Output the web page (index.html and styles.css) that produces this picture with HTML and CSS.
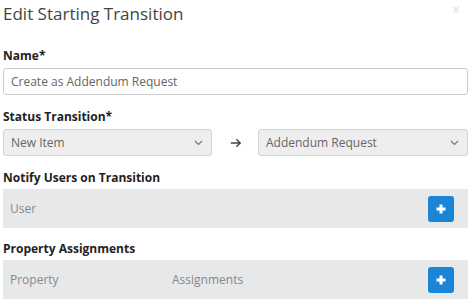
FILE: index.html
```html
<!DOCTYPE html>
<html lang="en">
<head>
  <meta charset="UTF-8" />
  <title>Edit Starting Transition</title>
  <link rel="stylesheet" href="styles.css">
</head>
<body>
  <div class="modal">
    <div class="modal-header">
      <h2>Edit Starting Transition</h2>
      <span class="close">&times;</span>
    </div>

    <label class="field-label">Name*</label>
    <div class="text-input">Create as Addendum Request</div>

    <label class="field-label">Status Transition*</label>
    <div class="transition-row">
      <div class="select">
        <span>New Item</span>
        <svg class="caret" width="9" height="6" viewBox="0 0 9 6"><path d="M1 1 L4.5 4.5 L8 1" fill="none" stroke="#777" stroke-width="1.2"/></svg>
      </div>
      <svg class="arrow" width="14" height="12" viewBox="0 0 14 12"><path d="M1 6 H12 M7.5 1.5 L12 6 L7.5 10.5" fill="none" stroke="#444" stroke-width="1.6"/></svg>
      <div class="select">
        <span>Addendum Request</span>
        <svg class="caret" width="9" height="6" viewBox="0 0 9 6"><path d="M1 1 L4.5 4.5 L8 1" fill="none" stroke="#777" stroke-width="1.2"/></svg>
      </div>
    </div>

    <label class="field-label">Notify Users on Transition</label>
    <div class="table-band">
      <span class="col-first">User</span>
      <button class="add-btn"><svg width="12" height="12" viewBox="0 0 12 12"><path d="M6 1.5 V10.5 M1.5 6 H10.5" stroke="#fff" stroke-width="3"/></svg></button>
    </div>

    <label class="field-label">Property Assignments</label>
    <div class="table-band">
      <span class="col-first">Property</span>
      <span class="col-second">Assignments</span>
      <button class="add-btn"><svg width="12" height="12" viewBox="0 0 12 12"><path d="M6 1.5 V10.5 M1.5 6 H10.5" stroke="#fff" stroke-width="3"/></svg></button>
    </div>
  </div>
</body>
</html>
```

FILE: styles.css
```css
body {
  margin: 0;
  background-color: #fff;
  font-family: 'Open Sans', 'Noto Sans', sans-serif;
  color: #333;
}

.modal {
  width: 465px;
  padding: 0 6px 0 3px;
}

.modal-header {
  display: flex;
  justify-content: space-between;
  align-items: flex-start;
  height: 47px;
}

h2 {
  margin: 2px 0 0 0;
  font-size: 17px;
  font-weight: 400;
  color: #444;
}

.close {
  margin: 1px 8px 0 0;
  font-size: 14px;
  line-height: 18px;
  color: #ddd;
}

.field-label {
  display: block;
  font-size: 12px;
  font-weight: 700;
  color: #222;
  line-height: 17px;
  margin-bottom: 4px;
}

.text-input {
  height: 25px;
  border: 1px solid #ccc;
  border-radius: 3px;
  padding-left: 7px;
  font-size: 12px;
  line-height: 25px;
  color: #666;
  margin-bottom: 13px;
}

.transition-row {
  display: flex;
  align-items: center;
  margin-bottom: 13px;
}

.select {
  height: 25px;
  border: 1px solid #d4d4d4;
  border-radius: 3px;
  background-color: #eeeeee;
  display: flex;
  justify-content: space-between;
  align-items: center;
  padding: 0 8px 0 7px;
  font-size: 12px;
  color: #666;
  box-sizing: content-box;
}

.transition-row .select:first-child {
  flex: 0 0 192px;
}

.transition-row .select:last-child {
  flex: 0 0 193px;
}

.arrow {
  margin: 0 16px 0 18px;
}

.table-band {
  height: 39px;
  background-color: #e7e8ea;
  display: flex;
  align-items: center;
  font-size: 12px;
  color: #888;
  margin-top: -1px;
  margin-bottom: 12px;
}

.col-first {
  padding-left: 7px;
  width: 162px;
}

.add-btn {
  margin-left: auto;
  margin-right: 14px;
  width: 26px;
  height: 26px;
  border: none;
  border-radius: 3px;
  background-color: #1a85d6;
  display: flex;
  justify-content: center;
  align-items: center;
  padding: 0;
}
```
